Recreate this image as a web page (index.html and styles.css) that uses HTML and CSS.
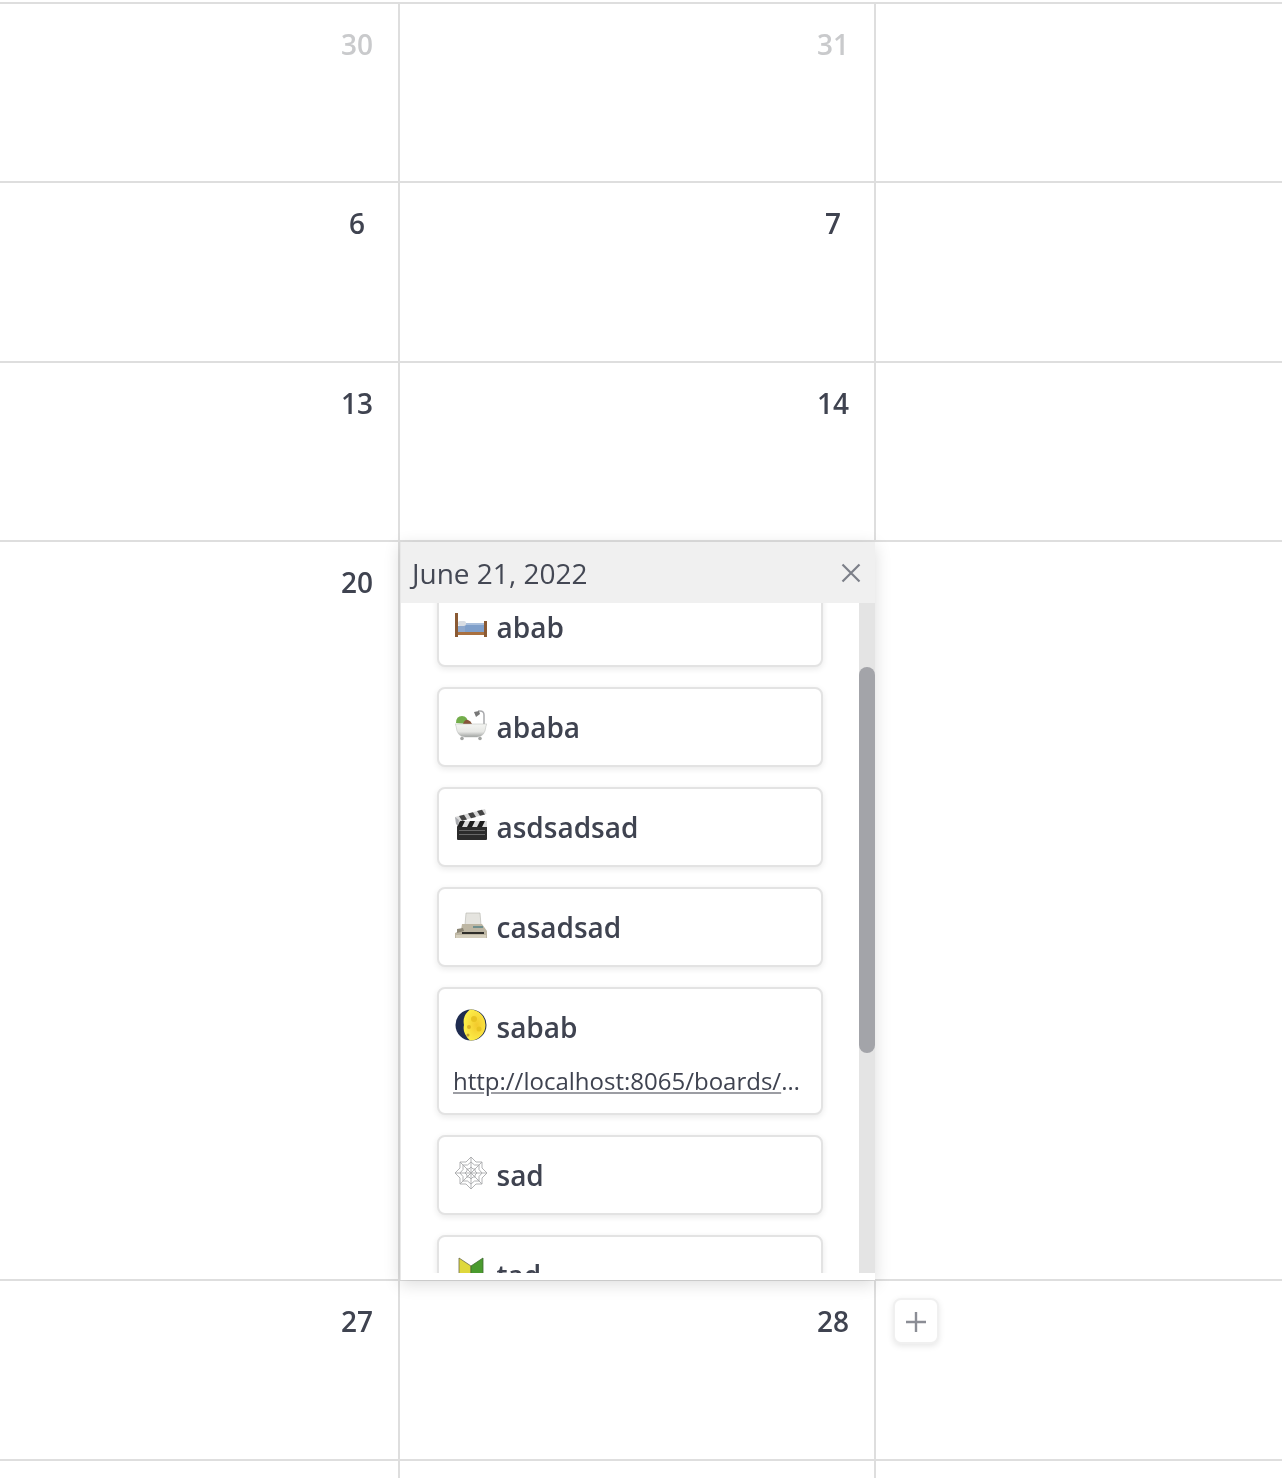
FILE: index.html
```html
<!DOCTYPE html>
<html lang="en">
<head>
<meta charset="utf-8">
<title>Calendar</title>
<link rel="stylesheet" href="styles.css">
</head>
<body>
<main class="calendar">
  <div class="row row-first">
    <div class="cell"><span class="day muted">30</span></div>
    <div class="cell"><span class="day muted">31</span></div>
    <div class="cell"></div>
  </div>
  <div class="row">
    <div class="cell"><span class="day day-single">6</span></div>
    <div class="cell"><span class="day day-single">7</span></div>
    <div class="cell"></div>
  </div>
  <div class="row row-short">
    <div class="cell"><span class="day">13</span></div>
    <div class="cell"><span class="day">14</span></div>
    <div class="cell"></div>
  </div>
  <div class="row row-tall">
    <div class="cell"><span class="day">20</span></div>
    <div class="cell cell-pop">
      <section class="popup">
        <header class="popup-head">
          <span class="popup-title">June 21, 2022</span>
          <svg class="close" width="24" height="24" viewBox="0 0 24 24"><path d="M3.500 3.500 20.500 20.500M20.500 3.500 3.500 20.500" fill="none" stroke="#7c7f88" stroke-width="2.200"/></svg>
        </header>
        <div class="popup-body">
          <div class="list">
            <div class="list-inner">
              <article class="card">
                <div class="card-title">
                  <svg class="emoji" viewBox="0 0 32 32"><rect x="0" y="4" width="3" height="24" fill="#8a5a34"/><rect x="29" y="12" width="3" height="16" fill="#8a5a34"/><rect x="3" y="23" width="26" height="3" fill="#a9703f"/><rect x="9" y="15" width="20" height="8" fill="#7f9fca"/><rect x="9" y="14" width="20" height="2" fill="#a9bfdc"/><rect x="3" y="12" width="8" height="5" rx="2" fill="#d9dde3"/><rect x="3" y="17" width="7" height="6" fill="#8fa8cc"/></svg>
                  <span>abab</span>
                </div>
              </article>
              <article class="card">
                <div class="card-title">
                  <svg class="emoji" viewBox="0 0 32 32"><defs><linearGradient id="tubFill" x1="0" y1="0" x2="0" y2="1"><stop offset="0" stop-color="#f4f5f2"/><stop offset=".6" stop-color="#e6e7e4"/><stop offset="1" stop-color="#9fa2a0"/></linearGradient></defs><path d="M29 17V6q0-4-4-4h-2" fill="none" stroke="#a9aaad" stroke-width="1.500"/><path d="M19 3l5-1 1 3-4 3z" fill="#777"/><path d="M1 14q0-7 6-7t6 8z" fill="#73ad4b"/><path d="M8 15q2-5 5-4t4 4z" fill="#87543a"/><circle cx="7" cy="29.500" r="1.800" fill="#a3a5a3"/><circle cx="25" cy="29.500" r="1.800" fill="#a3a5a3"/><path d="M0 15h32l-1 2q-1 11-9 11H10Q2 28 1 17z" fill="url(#tubFill)" stroke="#b7b9b6" stroke-width=".5"/></svg>
                  <span>ababa</span>
                </div>
              </article>
              <article class="card">
                <div class="card-title">
                  <svg class="emoji" viewBox="0 0 32 32"><rect x="2" y="17" width="30" height="14" rx="1" fill="#2b2b2b"/><path d="M4 21.500h26M4 25.500h26" stroke="#787878" stroke-width=".8"/><rect x="2" y="12" width="30" height="6" fill="#dcdcdc"/><path d="M5 12h5l-3 6H2zM15 12h5l-3 6h-5zM25 12h5l-3 6h-5z" fill="#1f1f1f"/><path d="M0 8 30 0l1.500 5L2 13z" fill="#d8d8d8"/><path d="M4 7l5-1.300 3 4.700-5 1.300zM13 4.500l5-1.300 3 4.700-5 1.300zM22 2l5-1.300 3 4.700-5 1.300z" fill="#444"/><path d="M0 8l4 3-1 6-2-2z" fill="#a9abaf"/></svg>
                  <span>asdsadsad</span>
                </div>
              </article>
              <article class="card">
                <div class="card-title">
                  <svg class="emoji" viewBox="0 0 32 32"><path d="M11 4h14l1 12H10z" fill="#e5e4df" stroke="#b4b3ac" stroke-width=".6"/><path d="M7 15h20l5 7v7H0v-5l6-3z" fill="#bdb6a3"/><rect x="18" y="17" width="10" height="2" fill="#6f8f8e"/><rect x="7" y="23" width="22" height="2" fill="#2f2e2a"/><rect x="1" y="26" width="30" height="3" fill="#d5cfbd"/><path d="M2 20l6-1 1 3-7 2z" fill="#8d8776"/></svg>
                  <span>casadsad</span>
                </div>
              </article>
              <article class="card">
                <div class="card-title">
                  <svg class="emoji" viewBox="0 0 32 32"><defs><radialGradient id="moonFill" cx=".6" cy=".5" r=".6"><stop offset="0" stop-color="#f3c92c"/><stop offset="1" stop-color="#fdf04a"/></radialGradient></defs><circle cx="16" cy="16" r="15.500" fill="#1f2c50"/><path d="M15 .5A15.500 15.500 0 1 1 15 31.500Q7 24 9 16 7 7 15 .5z" fill="url(#moonFill)"/><circle cx="19" cy="10" r="3" fill="#e8c422"/><circle cx="24" cy="20" r="2.500" fill="#e8c422"/><circle cx="14" cy="18" r="2" fill="#dcb425"/><circle cx="13" cy="26" r="1.500" fill="#c3a22e"/></svg>
                  <span>sabab</span>
                </div>
                <div class="card-link"><a href="#">http://localhost:8065/boards/</a>…</div>
              </article>
              <article class="card">
                <div class="card-title">
                  <svg class="emoji" viewBox="0 0 32 32" fill="none" stroke="#a9aaad" stroke-width=".9"><path d="M16 0 21 5 27 5 27 11 32 16 27 21 27 27 21 27 16 32 11 27 5 27 5 21 0 16 5 11 5 5 11 5z"/><path d="M16 5 19.500 8 24 8 24 12.500 27 16 24 19.500 24 24 19.500 24 16 27 12.500 24 8 24 8 19.500 5 16 8 12.500 8 8 12.500 8z"/><path d="M16 10 18 12 20 12 20 14 22 16 20 18 20 20 18 20 16 22 14 20 12 20 12 18 10 16 12 14 12 12 14 12z"/><path d="M16 0V32M0 16H32M5 5 27 27M27 5 5 27"/></svg>
                  <span>sad</span>
                </div>
              </article>
              <article class="card">
                <div class="card-title">
                  <svg class="emoji" viewBox="0 0 32 32"><path d="M4 1 16 9V30L4 22z" fill="#dfd83c" stroke="#6a6a4a" stroke-width=".8"/><path d="M28 1 16 9V30L28 22z" fill="#4a9b2e" stroke="#3d6a30" stroke-width=".8"/></svg>
                  <span>tad</span>
                </div>
              </article>
            </div>
          </div>
          <div class="scrollbar"><div class="thumb"></div></div>
        </div>
      </section>
    </div>
    <div class="cell"></div>
  </div>
  <div class="row row-last">
    <div class="cell"><span class="day">27</span></div>
    <div class="cell"><span class="day">28</span></div>
    <div class="cell cell-add">
      <button class="add" type="button" aria-label="Add">
        <svg width="20" height="20" viewBox="0 0 20 20"><path d="M10 0V20M0 10H20" fill="none" stroke="#8b8d95" stroke-width="2.400"/></svg>
      </button>
    </div>
  </div>
  <div class="row row-end">
    <div class="cell"></div>
    <div class="cell"></div>
    <div class="cell"></div>
  </div>
</main>
</body>
</html>
```

FILE: styles.css
```css
* {
  box-sizing: border-box;
}

html,
body {
  margin: 0;
  height: 100%;
  overflow: hidden;
  background: #fff;
}

body {
  font-family: "Open Sans", "Liberation Sans", sans-serif;
  color: #3f4350;
}

.calendar {
  display: flex;
  flex-direction: column;
  padding-top: 2px;
  will-change: transform;
}

.row {
  display: grid;
  grid-template-columns: 400px 476px 1fr;
  height: 180px;
  border-top: 2px solid #dedede;
  flex: none;
}

.row-first {
  height: 179px;
}

.row-short {
  height: 179px;
}

.row-tall {
  height: 739px;
}

.row-end {
  height: 40px;
}

.cell {
  position: relative;
  border-right: 2px solid #dedede;
  display: flex;
  justify-content: flex-end;
  align-items: flex-start;
  padding-right: 25px;
}

.cell:last-child {
  border-right: 0;
}

.day {
  font-size: 28px;
  font-weight: 600;
  line-height: 38px;
  margin-top: 21px;
}

.muted {
  color: #c9cacc;
}

.day-single {
  padding-right: 8px;
}

.cell-pop {
  padding: 0;
  border-right: 0;
}

.popup {
  position: absolute;
  top: 0;
  left: 0;
  width: 475px;
  height: 738px;
  background: #fff;
  display: flex;
  flex-direction: column;
  padding-bottom: 7px;
  border-left: 1px solid #e8e8e8;
  box-shadow: 0 4px 16px rgba(0, 0, 0, .14);
  z-index: 2;
}

.popup-head {
  flex: none;
  height: 61px;
  background: #f0f0f0;
  display: flex;
  align-items: center;
  justify-content: space-between;
  padding: 0 12px 0 11px;
  position: relative;
  z-index: 1;
}

.popup-title {
  font-size: 28px;
  line-height: 38px;
  color: #444854;
}

.popup-body {
  flex: 1;
  min-height: 0;
  display: flex;
}

.list {
  flex: 1;
  min-width: 0;
  overflow: hidden;
  padding: 0 36px;
}

.list-inner {
  margin-top: -16px;
  display: flex;
  flex-direction: column;
  gap: 20px;
}

.card {
  flex: none;
  min-height: 80px;
  border: 2px solid #e3e3e3;
  border-radius: 8px;
  background: #fff;
  box-shadow: 0 2px 6px rgba(0, 0, 0, .09);
  padding: 0 14px;
}

.card-title {
  display: flex;
  align-items: center;
  height: 76px;
  font-size: 28px;
  font-weight: 600;
  line-height: 38px;
}

.emoji {
  flex: none;
  width: 32px;
  height: 32px;
  margin: -5px 9.500px 0 2px;
}

.card-link {
  font-size: 24px;
  line-height: 34px;
  color: #3f4350;
  white-space: nowrap;
  margin-top: -1px;
  padding-bottom: 15px;
}

.card-link a {
  color: inherit;
  text-decoration: underline;
  text-decoration-color: #9c9da3;
}

.scrollbar {
  flex: none;
  width: 16px;
  background: #e4e4e4;
  padding-top: 64px;
}

.thumb {
  height: 386px;
  background: #a3a4a9;
  border-radius: 8px;
}

.cell-add {
  justify-content: flex-start;
  padding: 17px 0 0 17px;
}

.add {
  width: 46px;
  height: 46px;
  padding: 2px 0 0;
  display: flex;
  align-items: center;
  justify-content: center;
  background: #fff;
  border: 2px solid #f0f0f0;
  border-radius: 8px;
  box-shadow: 0 2px 6px rgba(0, 0, 0, .1);
}
```
